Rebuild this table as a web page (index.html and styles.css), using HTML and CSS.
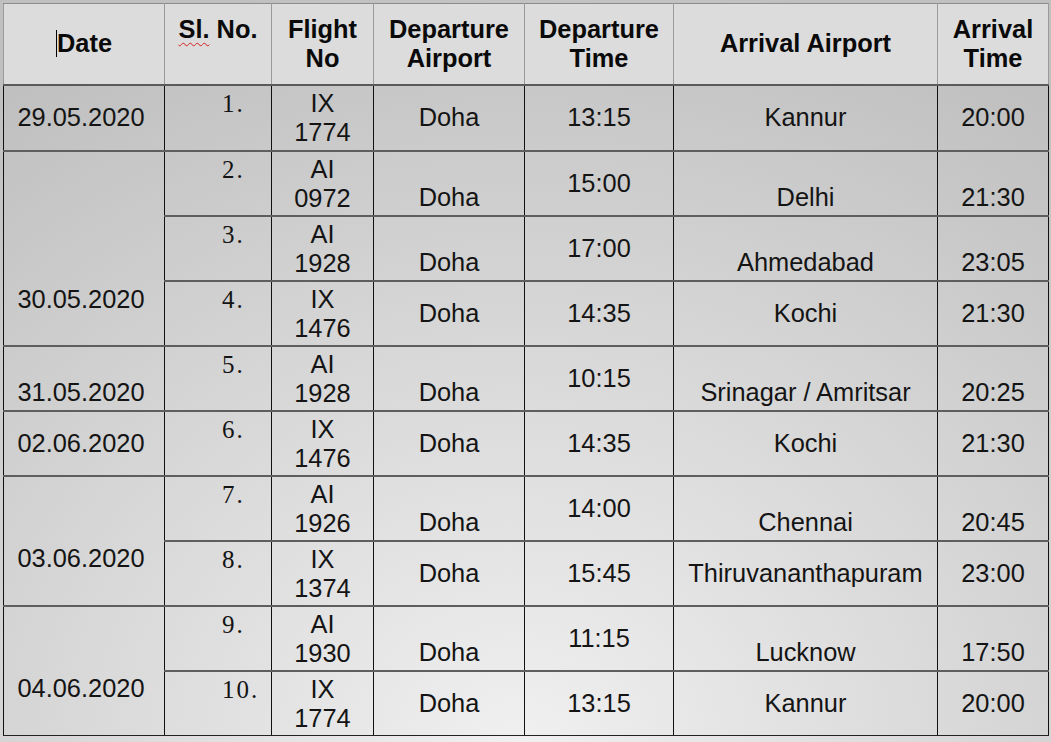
FILE: index.html
```html
<!DOCTYPE html>
<html>
<head>
<meta charset="utf-8">
<link rel="stylesheet" href="styles.css">
</head>
<body>
<table class="flights">
  <colgroup>
    <col class="w-date"><col class="w-sl"><col class="w-fl"><col class="w-dep"><col class="w-dt"><col class="w-arr"><col class="w-at">
  </colgroup>
  <thead>
    <tr class="head">
      <th class="mid"><span class="caret"></span>Date</th>
      <th><span class="spell">Sl.</span> No.</th>
      <th>Flight<br>No</th>
      <th>Departure<br>Airport</th>
      <th>Departure<br>Time</th>
      <th class="mid">Arrival Airport</th>
      <th>Arrival<br>Time</th>
    </tr>
  </thead>
  <tbody>
    <tr class="r1">
      <td class="date">29.05.2020</td>
      <td class="sl">1.</td>
      <td class="top">IX<br>1774</td>
      <td>Doha</td><td>13:15</td><td>Kannur</td><td>20:00</td>
    </tr>
    <tr>
      <td rowspan="3" class="date span3">30.05.2020</td>
      <td class="sl">2.</td>
      <td class="top">AI<br>0972</td>
      <td class="bot">Doha</td><td>15:00</td><td class="bot">Delhi</td><td class="bot">21:30</td>
    </tr>
    <tr>
      <td class="sl">3.</td>
      <td class="top">AI<br>1928</td>
      <td class="bot">Doha</td><td>17:00</td><td class="bot">Ahmedabad</td><td class="bot">23:05</td>
    </tr>
    <tr>
      <td class="sl">4.</td>
      <td class="top">IX<br>1476</td>
      <td>Doha</td><td>14:35</td><td>Kochi</td><td>21:30</td>
    </tr>
    <tr>
      <td class="date bot">31.05.2020</td>
      <td class="sl">5.</td>
      <td class="top">AI<br>1928</td>
      <td class="bot">Doha</td><td>10:15</td><td class="bot">Srinagar / Amritsar</td><td class="bot">20:25</td>
    </tr>
    <tr>
      <td class="date">02.06.2020</td>
      <td class="sl">6.</td>
      <td class="top">IX<br>1476</td>
      <td>Doha</td><td>14:35</td><td>Kochi</td><td>21:30</td>
    </tr>
    <tr>
      <td rowspan="2" class="date span2">03.06.2020</td>
      <td class="sl">7.</td>
      <td class="top">AI<br>1926</td>
      <td class="bot">Doha</td><td>14:00</td><td class="bot">Chennai</td><td class="bot">20:45</td>
    </tr>
    <tr>
      <td class="sl">8.</td>
      <td class="top">IX<br>1374</td>
      <td>Doha</td><td>15:45</td><td>Thiruvananthapuram</td><td>23:00</td>
    </tr>
    <tr>
      <td rowspan="2" class="date span2 last">04.06.2020</td>
      <td class="sl">9.</td>
      <td class="top">AI<br>1930</td>
      <td class="bot">Doha</td><td>11:15</td><td class="bot">Lucknow</td><td class="bot">17:50</td>
    </tr>
    <tr>
      <td class="sl">10.</td>
      <td class="top">IX<br>1774</td>
      <td>Doha</td><td>13:15</td><td>Kannur</td><td>20:00</td>
    </tr>
  </tbody>
</table>
</body>
</html>
```
FILE: styles.css
```css
html, body {
  margin: 0;
  padding: 0;
  width: 1051px;
  height: 742px;
  overflow: hidden;
}
body {
  background: radial-gradient(ellipse 900px 780px at 520px 745px, #f0f0f0 0%, #d6d6d6 55%, #c0c0c0 100%);
  font-family: "Liberation Sans", Arial, sans-serif;
  color: #141414;
}
.flights {
  margin: 3px 0 0 3px;
  width: 1046px;
  border-collapse: collapse;
  table-layout: fixed;
  font-size: 25.4px;
  line-height: 29px;
}
.w-date { width: 161px; }
.w-sl { width: 107px; }
.w-fl { width: 102px; }
.w-dep { width: 151px; }
.w-dt { width: 149px; }
.w-arr { width: 264px; }
.w-at { width: 111px; }

.head { height: 81px; }
.flights th {
  background: #dcdcdc;
  font-weight: bold;
  color: #0a0a0a;
  text-align: center;
  vertical-align: top;
  padding: 11px 0 0;
  border-top: 1px solid #8c8c8c;
  border-left: 1px solid #9a9a9a;
  border-right: 1px solid #9a9a9a;
  border-bottom: 2px solid #5a5a5a;
}
.flights th.mid {
  vertical-align: middle;
  padding-top: 0;
}
.caret {
  display: inline-block;
  width: 1px;
  height: 27px;
  background: #000;
  vertical-align: -5px;
}
.spell {
  text-decoration: underline wavy #d42020;
  text-decoration-thickness: 1px;
  text-underline-offset: 4px;
}

.flights tbody tr { height: 65px; }
.flights tbody tr.r1 { height: 66px; }
.flights td {
  text-align: center;
  vertical-align: middle;
  padding: 0;
  border-left: 1px solid #111;
  border-right: 1px solid #111;
  border-top: 2px solid #5e5e5e;
  border-bottom: 2px solid #5e5e5e;
}
.flights tbody tr:last-child td,
.flights td.last {
  border-bottom: 1px solid #222;
}
.flights td.date {
  padding-right: 6px;
}
.flights td.top {
  vertical-align: top;
  padding-top: 3px;
}
.flights td.bot {
  vertical-align: bottom;
  padding-bottom: 3px;
}
.flights td.sl {
  font-family: "Liberation Serif", "Times New Roman", serif;
  font-size: 25px;
  letter-spacing: 2px;
  text-align: left;
  vertical-align: top;
  padding: 3px 0 0 57px;
}
.flights td.span3 {
  vertical-align: top;
  padding-top: 133px;
}
.flights td.span2 {
  vertical-align: top;
  padding-top: 67px;
}
```
